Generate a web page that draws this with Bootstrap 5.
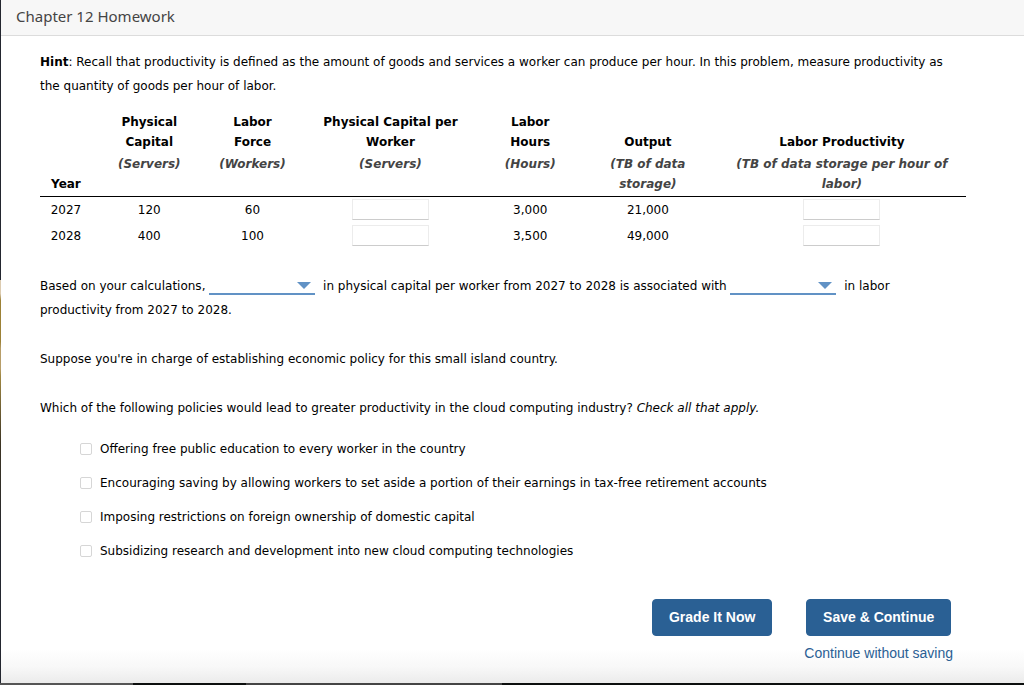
<!DOCTYPE html>
<html lang="en">
<head>
<meta charset="utf-8">
<meta name="viewport" content="width=device-width, initial-scale=1">
<title>Chapter 12 Homework</title>
<link href="https://cdn.jsdelivr.net/npm/bootstrap@5.3.0/dist/css/bootstrap.min.css" rel="stylesheet">
<style>
  body { font-family: "DejaVu Sans", Verdana, sans-serif; font-size: 12px; line-height: 24px; color: #000; }
  .window-edge { width: 1px; background: linear-gradient(#23262f 0 41%, #dccbb0 41% 43%, #9c8136 44% 50%, #b79d68 51% 54%, #a08843 55%, #3c3423 65%, #23262f 80%); }
  .page-bar { background: #f7f7f7; border-bottom: 1px solid #dcdcdc; padding: 4px 15px 7px; }
  .page-bar h1 { font: 15px/24px "Noto Sans", "Open Sans", sans-serif; color: #444; }
  .problem { padding: 14px 58px 0 39px; }
  .data-table { width: 100%; table-layout: fixed; margin: 14px 0 25px; text-align: center; line-height: 20px; }
  .data-table th, .data-table td { padding: 0; }
  .data-table thead th { padding-bottom: 2px; vertical-align: bottom; }
  .data-table .unit-row th { color: #444; font-style: italic; vertical-align: top; }
  .data-table .unit-row .year-head { color: #000; font-style: normal; vertical-align: bottom; }
  .data-table tbody { border-top: 1px solid #000; }
  .data-table tbody tr { height: 26px; }
  .data-table tbody th { font-weight: 400; }
  .answer-box { display: block; width: 77px; height: 21px; margin: 0 auto; padding: 0 4px; border: 1px solid #ececec; border-bottom-color: #ccc; border-radius: 0; font-size: 12px; }
  .blank-select { display: inline-block; width: 106px; height: 18px; padding: 0 20px 0 4px; border: 0; border-bottom: 2px solid #6192c5; border-radius: 0; font-size: 12px; line-height: 16px; vertical-align: middle; appearance: none; background: #fff url("data:image/svg+xml,%3Csvg xmlns='http://www.w3.org/2000/svg' viewBox='0 0 14 7'%3E%3Cpath fill='%236192c5' d='M0 0h14L7 7z'/%3E%3C/svg%3E") no-repeat right 4px center / 14px 7px; }
  .question { margin-bottom: 25px; }
  .policies { margin: 17px 0 0 39px; gap: 10px; }
  .policies .form-check { min-height: 24px; padding-left: 21px; margin: 0; }
  .policies .form-check-input { width: 12px; height: 12px; margin: 6px 0 0 -20px; border: 1px solid #d6d6d6; border-radius: 2px; }
  .actions { font-family: "Liberation Sans", Arial, sans-serif; font-size: 14px; line-height: 20px; gap: 32px; padding: 36px 71px 16px 0; }
  .btn-course { --bs-btn-color: #fff; --bs-btn-bg: #2a6094; --bs-btn-border-color: #2a6094; --bs-btn-hover-color: #fff; --bs-btn-hover-bg: #204f7c; --bs-btn-font-size: 14px; --bs-btn-line-height: 19px; --bs-btn-padding-y: 8px; --bs-btn-padding-x: 16px; --bs-btn-border-radius: 4px; font-weight: 700; }
  .actions a { color: #2a6094; margin-top: 7px; }
  .page-area { background: linear-gradient(to top, #ebebeb, #f8f8f8 16px, #fff 34px); }
  .window-foot { height: 2px; background: linear-gradient(to right, #555 13%, #0c0f0e 13% 24%, #444 24% 49%, #0c0f0e 49%); }
</style>
</head>
<body>
<div class="d-flex flex-column min-vh-100">
  <div class="d-flex flex-grow-1">
    <div class="window-edge flex-shrink-0"></div>
    <div class="page-area d-flex flex-column flex-grow-1">
      <header class="page-bar"><h1 class="m-0">Chapter 12 Homework</h1></header>
      <main class="problem">
        <p class="m-0 pe-3"><b>Hint</b>: Recall that productivity is defined as the amount of goods and services a worker can produce per hour. In this problem, measure productivity as the quantity of goods per hour of labor.</p>

        <table class="data-table">
          <colgroup>
            <col style="width:5.6%"><col style="width:12.4%"><col style="width:9.9%"><col style="width:19.9%"><col style="width:10.3%"><col style="width:15.1%"><col style="width:26.8%">
          </colgroup>
          <thead>
            <tr>
              <td></td>
              <th scope="col">Physical<br>Capital</th>
              <th scope="col">Labor<br>Force</th>
              <th scope="col">Physical Capital per<br>Worker</th>
              <th scope="col">Labor<br>Hours</th>
              <th scope="col">Output</th>
              <th scope="col">Labor Productivity</th>
            </tr>
            <tr class="unit-row">
              <th scope="col" class="year-head">Year</th>
              <th>(Servers)</th>
              <th>(Workers)</th>
              <th>(Servers)</th>
              <th>(Hours)</th>
              <th>(TB of data<br>storage)</th>
              <th>(TB of data storage per hour of<br>labor)</th>
            </tr>
          </thead>
          <tbody>
            <tr>
              <th scope="row">2027</th><td>120</td><td>60</td>
              <td><input class="answer-box" type="text" aria-label="Physical capital per worker, 2027"></td>
              <td>3,000</td><td>21,000</td>
              <td><input class="answer-box" type="text" aria-label="Labor productivity, 2027"></td>
            </tr>
            <tr>
              <th scope="row">2028</th><td>400</td><td>100</td>
              <td><input class="answer-box" type="text" aria-label="Physical capital per worker, 2028"></td>
              <td>3,500</td><td>49,000</td>
              <td><input class="answer-box" type="text" aria-label="Labor productivity, 2028"></td>
            </tr>
          </tbody>
        </table>

        <p class="question pe-3">Based on your calculations,
          <select class="blank-select me-1" aria-label="Change in physical capital per worker"><option></option><option>an increase</option><option>a decrease</option></select>
          in physical capital per worker from 2027 to 2028 is associated with
          <select class="blank-select me-1" aria-label="Change in labor productivity"><option></option><option>an increase</option><option>a decrease</option></select>
          in labor productivity from 2027 to 2028.</p>
        <p class="question">Suppose you're in charge of establishing economic policy for this small island country.</p>
        <p class="m-0">Which of the following policies would lead to greater productivity in the cloud computing industry? <i>Check all that apply.</i></p>

        <div class="policies d-flex flex-column">
          <div class="form-check"><input class="form-check-input" type="checkbox" id="p1"><label for="p1">Offering free public education to every worker in the country</label></div>
          <div class="form-check"><input class="form-check-input" type="checkbox" id="p2"><label for="p2">Encouraging saving by allowing workers to set aside a portion of their earnings in tax-free retirement accounts</label></div>
          <div class="form-check"><input class="form-check-input" type="checkbox" id="p3"><label for="p3">Imposing restrictions on foreign ownership of domestic capital</label></div>
          <div class="form-check"><input class="form-check-input" type="checkbox" id="p4"><label for="p4">Subsidizing research and development into new cloud computing technologies</label></div>
        </div>
      </main>
      <div class="actions d-flex justify-content-end align-items-start">
        <button type="button" class="btn btn-course">Grade It Now</button>
        <div class="d-flex flex-column align-items-center">
          <button type="button" class="btn btn-course">Save &amp; Continue</button>
          <a href="#" class="text-decoration-none">Continue without saving</a>
        </div>
      </div>
    </div>
  </div>
  <div class="window-foot"></div>
</div>
<script src="https://cdn.jsdelivr.net/npm/bootstrap@5.3.0/dist/js/bootstrap.bundle.min.js"></script>
</body>
</html>
